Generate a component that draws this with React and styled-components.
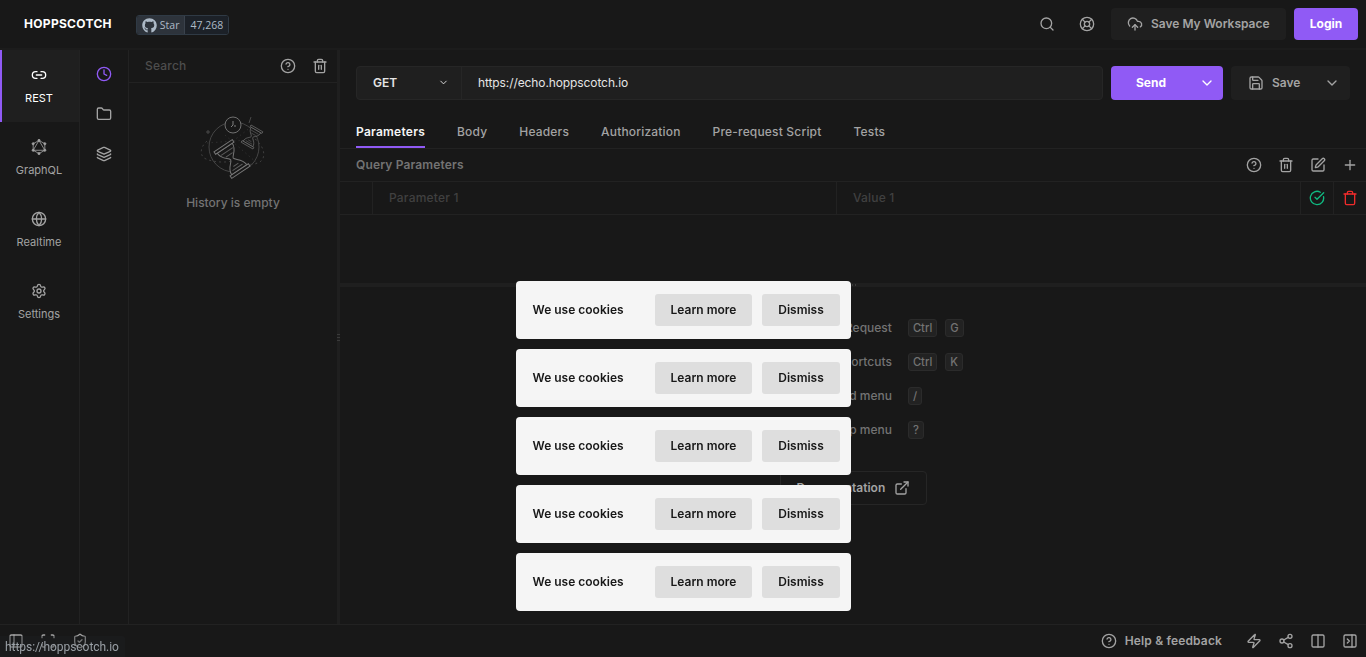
import React from "react";
import styled, { createGlobalStyle } from "styled-components";
import {
  ChevronDown,
  CircleCheckBig,
  CircleHelp,
  Clock,
  CloudUpload,
  Columns2,
  ExternalLink,
  Folder,
  Globe,
  Layers,
  LifeBuoy,
  Link2,
  PanelLeft,
  PanelRightClose,
  Plus,
  Save,
  Scan,
  Search,
  Settings,
  Share2,
  ShieldCheck,
  SquarePen,
  Trash,
  Trash2,
  Zap
} from "lucide-react";
import { FaGithub } from "react-icons/fa";

const accent = "#905af5";
const border = "#222222";

const GlobalStyle = createGlobalStyle`
  html, body {
    margin: 0;
    height: 100%;
    overflow: hidden;
    background: #181818;
    color: #a3a3a3;
    font-family: Inter, "Noto Sans", sans-serif;
    font-size: 12px;
  }
  * {
    box-sizing: border-box;
  }
  svg {
    flex-shrink: 0;
  }
`;

const GraphqlIcon = ({ size = 16 }) => (
  <svg width={size} height={size} viewBox="1 1 22 22" fill="none" stroke="currentColor" strokeWidth="1.1">
    <path d="M12 3 20 7.5V16.5L12 21 4 16.5V7.5Z" />
    <path d="M12 3 20 16.5H4Z" />
    <circle cx="12" cy="3" r="1.5" fill="currentColor" />
    <circle cx="20" cy="7.5" r="1.5" fill="currentColor" />
    <circle cx="20" cy="16.5" r="1.5" fill="currentColor" />
    <circle cx="12" cy="21" r="1.5" fill="currentColor" />
    <circle cx="4" cy="16.5" r="1.5" fill="currentColor" />
    <circle cx="4" cy="7.5" r="1.5" fill="currentColor" />
  </svg>
);

const Hourglass = ({ transform }) => (
  <g transform={transform} stroke="#777" fill="#181818">
    <path d="M-9 -13C-9 -5 -2 -3 -1.5 0-2 3-9 5-9 13H9C9 5 2 3 1.5 0 2-3 9-5 9-13Z" />
    <path d="M-7 -9H7M-4 -5H4M-3 7H3M-6 10H6" stroke="#5c5c5c" />
    <rect x="-11" y="-16" width="22" height="3" />
    <rect x="-11" y="13" width="22" height="3" />
  </g>
);

const HistoryArt = () => (
  <svg width="68" height="68" viewBox="0 0 68 68" fill="none" strokeWidth="1">
    <circle cx="35" cy="32" r="25" stroke="#454545" />
    <path d="M8 26C1 32 0 41 7 44c7 3 18 4 26 2M56 24c8 6 11 16 7 21-3 4-10 5-17 4" stroke="#3f3f3f" strokeDasharray="2 3" />
    <path d="M8 28 62 24M16 40 52 12M26 20 58 48" stroke="#2e2e2e" strokeDasharray="1.5 3" />
    <circle cx="34" cy="10" r="8" fill="#181818" stroke="#707070" />
    <path d="M34 6v4l-2 2M35 11h2" stroke="#808080" />
    <path d="M52 2 50 8M7 17h4M9 15v4" stroke="#484848" />
    <Hourglass transform="translate(33 44) rotate(-33.7)" />
    <Hourglass transform="translate(53 22) rotate(30) scale(0.62)" />
  </svg>
);

const Page = styled.div`
  height: 100vh;
  display: flex;
  flex-direction: column;
`;

const Header = styled.header`
  flex: 0 0 50px;
  display: flex;
  align-items: center;
  justify-content: space-between;
  padding: 0 8px 0 24px;
  border-bottom: 2px solid #1c1c1c;
`;

const Brand = styled.div`
  display: flex;
  align-items: center;
  gap: 24px;
`;

const Logo = styled.span`
  padding-bottom: 1px;
  color: #fff;
  font-weight: 700;
  font-size: 12px;
  letter-spacing: 0.3px;
`;

const StarBadge = styled.div`
  display: flex;
  height: 20px;
  margin-top: 2px;
  border: 1px solid #2f3a45;
  border-radius: 3px;
  font: 500 10.5px "Open Sans", sans-serif;
  color: #adbac7;
  overflow: hidden;
`;

const StarPart = styled.span`
  display: flex;
  align-items: center;
  gap: 3px;
  padding: 0 5px;
  background: ${(p) => (p.$count ? "#1c2128" : "#2d333b")};
  border-left: ${(p) => (p.$count ? "1px solid #3a424c" : "none")};
`;

const HeaderActions = styled.div`
  display: flex;
  align-items: center;
`;

const HeaderIcon = styled.button`
  width: 40px;
  height: 32px;
  display: flex;
  align-items: center;
  justify-content: center;
  background: none;
  border: 0;
  padding: 0;
  color: #a3a3a3;
`;

const WorkspaceButton = styled.button`
  height: 32px;
  width: 175px;
  display: flex;
  align-items: center;
  gap: 8px;
  margin: 0 8px 0 4px;
  padding: 0 16px 1px;
  background: #1f1f1f;
  border: 0;
  border-radius: 4px;
  color: #a3a3a3;
  font: 600 12px Inter, sans-serif;
  white-space: nowrap;
`;

const LoginButton = styled.button`
  height: 32px;
  width: 64px;
  padding: 0 0 2px;
  background: ${accent};
  border: 0;
  border-radius: 4px;
  color: #fff;
  font: 700 12px Inter, sans-serif;
`;

const Body = styled.div`
  flex: 1;
  min-height: 0;
  display: flex;
`;

const Nav = styled.nav`
  flex: 0 0 80px;
  border-right: 1px solid ${border};
`;

const NavItem = styled.div`
  height: 72px;
  display: flex;
  flex-direction: column;
  align-items: center;
  justify-content: center;
  gap: 8px;
  font-size: 11px;
  color: ${(p) => (p.$active ? "#fff" : "#a3a3a3")};
  background: ${(p) => (p.$active ? "#1f1f1f" : "transparent")};
  border-left: 2px solid ${(p) => (p.$active ? accent : "transparent")};
  padding-right: 3px;
`;

const SubNav = styled.div`
  flex: 0 0 49px;
  padding-top: 4px;
  border-right: 1px solid ${border};
`;

const SubNavItem = styled.div`
  height: 40px;
  display: flex;
  align-items: center;
  justify-content: center;
  color: ${(p) => (p.$active ? accent : "#a3a3a3")};
`;

const HistoryPanel = styled.aside`
  flex: 0 0 208px;
  display: flex;
  flex-direction: column;
`;

const SearchRow = styled.div`
  height: 33px;
  display: flex;
  align-items: center;
  padding: 0 1px 0 16px;
  border-bottom: 1px solid ${border};
  font-weight: 500;
  letter-spacing: 0.2px;
  color: #4d4d4d;
`;

const SearchText = styled.span`
  flex: 1;
  padding-bottom: 2px;
`;

const SquareIcon = styled.span`
  width: 32px;
  height: 32px;
  display: flex;
  align-items: center;
  justify-content: center;
  color: ${(p) => p.$color || "#a3a3a3"};
`;

const EmptyState = styled.div`
  display: flex;
  flex-direction: column;
  align-items: center;
  gap: 12px;
  padding-top: 32px;
  font-weight: 500;
  color: #737373;
`;

const VerticalSplit = styled.div`
  flex: 0 0 3px;
  display: flex;
  align-items: center;
  background: #1f1f1f;
`;

const VerticalGrip = styled.span`
  width: 3px;
  height: 7px;
  background: repeating-linear-gradient(#3a3a3a 0 1px, transparent 1px 3px);
`;

const Main = styled.main`
  flex: 1;
  min-width: 0;
  display: flex;
  flex-direction: column;
`;

const UrlBar = styled.div`
  display: flex;
  padding: 16px 16px 0;
  gap: 8px;
`;

const UrlGroup = styled.div`
  flex: 1;
  display: flex;
  height: 34px;
  background: #1f1f1f;
  border: 1px solid #262626;
  border-radius: 4px;
`;

const Method = styled.div`
  width: 105px;
  display: flex;
  align-items: center;
  justify-content: space-between;
  padding: 0 12px 1px 16px;
  border-right: 1px solid #262626;
  color: #e5e5e5;
  font-weight: 600;
`;

const UrlText = styled.div`
  flex: 1;
  display: flex;
  align-items: center;
  padding: 0 0 1px 16px;
  letter-spacing: -0.1px;
  color: #e5e5e5;
`;

const SendButton = styled.button`
  width: 112px;
  height: 34px;
  display: flex;
  align-items: center;
  padding: 0 0 1px;
  background: ${accent};
  border: 0;
  border-radius: 4px;
  color: #fff;
  font: 700 12px Inter, sans-serif;
`;

const SendLabel = styled.span`
  flex: 1;
  text-align: center;
`;

const SendCaret = styled.span`
  width: 32px;
  display: flex;
  justify-content: center;
`;

const SaveButton = styled.button`
  width: 119px;
  height: 34px;
  display: flex;
  align-items: center;
  padding: 0 10px 1px 17px;
  background: #1f1f1f;
  border: 0;
  border-radius: 4px;
  color: #a3a3a3;
  font: 600 12px Inter, sans-serif;
`;

const SaveLabel = styled.span`
  flex: 1;
  text-align: left;
  padding-left: 8px;
`;

const Tabs = styled.div`
  display: flex;
  gap: 32px;
  height: 34px;
  margin-top: 15px;
  padding: 0 16px;
  border-bottom: 1px solid ${border};
`;

const Tab = styled.div`
  display: flex;
  align-items: center;
  height: 33px;
  padding-top: 1px;
  font-weight: ${(p) => (p.$active ? 600 : 500)};
  letter-spacing: ${(p) => (p.$active ? "0.25px" : "0.18px")};
  color: ${(p) => (p.$active ? "#f5f5f5" : "#a3a3a3")};
  border-bottom: 2px solid ${(p) => (p.$active ? accent : "transparent")};
`;

const QueryHeader = styled.div`
  height: 33px;
  display: flex;
  align-items: center;
  padding-left: 16px;
  border-bottom: 1px solid ${border};
  font-weight: 600;
  letter-spacing: 0.15px;
  color: #737373;
`;

const QueryTitle = styled.span`
  flex: 1;
  padding-bottom: 2px;
`;

const ParamRow = styled.div`
  height: 33px;
  display: grid;
  grid-template-columns: 33px 1fr 1fr 33px 32px;
  border-bottom: 1px solid ${border};
  color: #404040;
  font-weight: 500;
  letter-spacing: 0.2px;
`;

const ParamCell = styled.div`
  display: flex;
  align-items: center;
  justify-content: ${(p) => (p.$icon ? "center" : "flex-start")};
  padding: 0 0 ${(p) => (p.$icon ? 0 : "1px")} ${(p) => (p.$icon ? 0 : "16px")};
  border-right: ${(p) => (p.$last ? "none" : `1px solid ${border}`)};
  color: ${(p) => p.$color || "inherit"};
`;

const RequestArea = styled.div`
  flex: 0 0 68px;
`;

const HorizontalSplit = styled.div`
  flex: 0 0 4px;
  display: flex;
  justify-content: center;
  align-items: center;
  background: #1f1f1f;
`;

const HorizontalGrip = styled.span`
  width: 9px;
  height: 2px;
  background: repeating-linear-gradient(90deg, #3a3a3a 0 1px, transparent 1px 3px);
`;

const ResponseArea = styled.div`
  flex: 1;
  display: flex;
  flex-direction: column;
  align-items: center;
  padding-top: 28px;
  font-weight: 500;
  color: #737373;
`;

const Shortcuts = styled.div`
  display: grid;
  grid-template-columns: auto 53px;
  column-gap: 16px;
  row-gap: 8px;
  align-items: center;
`;

const ShortcutLabel = styled.span`
  height: 26px;
  line-height: 26px;
  text-align: right;
`;

const Keys = styled.span`
  display: flex;
  gap: 8px;
`;

const Kbd = styled.kbd`
  display: inline-block;
  padding: 0 4px;
  height: 18px;
  background: #222;
  border: 1px solid #2b2b2b;
  border-radius: 3px;
  color: #737373;
  font: 500 11.2px/16px Inter, sans-serif;
`;

const DocsButton = styled.div`
  width: 147px;
  height: 34px;
  display: flex;
  align-items: center;
  gap: 9px;
  margin-top: 28px;
  padding: 0 16px 1px;
  border: 1px solid #262626;
  border-radius: 4px;
  color: #a3a3a3;
  font-weight: 600;
  white-space: nowrap;
`;

const Footer = styled.footer`
  flex: 0 0 33px;
  display: flex;
  align-items: center;
  justify-content: space-between;
  border-top: 1px solid ${border};
`;

const FooterGroup = styled.div`
  display: flex;
  align-items: center;
`;

const HelpButton = styled.div`
  display: flex;
  align-items: center;
  gap: 8px;
  padding: 0 16px 1px;
  font-weight: 600;
  letter-spacing: 0.15px;
  color: #a3a3a3;
`;

const StatusBubble = styled.div`
  position: fixed;
  left: 0;
  bottom: 0;
  height: 21px;
  padding: 0 6px 0 5px;
  display: flex;
  align-items: center;
  background: rgba(32, 33, 36, 0.35);
  border-top-right-radius: 3px;
  letter-spacing: -0.05px;
  color: #9aa0a6;
  font: 12px Roboto, sans-serif;
`;

const Toasts = styled.div`
  position: fixed;
  left: calc(50% - 167.5px);
  bottom: 46px;
  width: 335px;
  display: flex;
  flex-direction: column;
  gap: 10px;
`;

const Toast = styled.div`
  height: 58px;
  display: flex;
  align-items: center;
  padding: 0 11px 0 17px;
  background: #f5f5f5;
  border-radius: 4px;
  color: #181818;
  font-weight: 600;
`;

const ToastText = styled.span`
  flex: 1;
  padding-bottom: 1px;
`;

const ToastButton = styled.span`
  height: 32px;
  width: ${(p) => p.$width}px;
  margin-left: ${(p) => p.$gap || 0}px;
  padding: 0 0 1px 1px;
  display: flex;
  align-items: center;
  justify-content: center;
  background: #dedede;
  border-radius: 3px;
`;

const navItems = [
  { label: "REST", icon: <Link2 size={16} />, active: true },
  { label: "GraphQL", icon: <GraphqlIcon /> },
  { label: "Realtime", icon: <Globe size={16} /> },
  { label: "Settings", icon: <Settings size={16} /> }
];

const tabs = ["Parameters", "Body", "Headers", "Authorization", "Pre-request Script", "Tests"];

const shortcuts = [
  ["Send Request", ["Ctrl", "G"]],
  ["Keyboard shortcuts", ["Ctrl", "K"]],
  ["Search & command menu", ["/"]],
  ["Help menu", ["?"]]
];

const App = () => (
  <Page>
    <GlobalStyle />
    <Header>
      <Brand>
        <Logo>HOPPSCOTCH</Logo>
        <StarBadge>
          <StarPart>
            <FaGithub size={15} />
            Star
          </StarPart>
          <StarPart $count>47,268</StarPart>
        </StarBadge>
      </Brand>
      <HeaderActions>
        <HeaderIcon>
          <Search size={16} />
        </HeaderIcon>
        <HeaderIcon>
          <LifeBuoy size={16} />
        </HeaderIcon>
        <WorkspaceButton>
          <CloudUpload size={16} />
          Save My Workspace
        </WorkspaceButton>
        <LoginButton>Login</LoginButton>
      </HeaderActions>
    </Header>
    <Body>
      <Nav>
        {navItems.map((item) => (
          <NavItem key={item.label} $active={item.active}>
            {item.icon}
            {item.label}
          </NavItem>
        ))}
      </Nav>
      <SubNav>
        <SubNavItem $active>
          <Clock size={16} />
        </SubNavItem>
        <SubNavItem>
          <Folder size={16} />
        </SubNavItem>
        <SubNavItem>
          <Layers size={16} />
        </SubNavItem>
      </SubNav>
      <HistoryPanel>
        <SearchRow>
          <SearchText>Search</SearchText>
          <SquareIcon>
            <CircleHelp size={16} />
          </SquareIcon>
          <SquareIcon>
            <Trash2 size={16} />
          </SquareIcon>
        </SearchRow>
        <EmptyState>
          <HistoryArt />
          History is empty
        </EmptyState>
      </HistoryPanel>
      <VerticalSplit>
        <VerticalGrip />
      </VerticalSplit>
      <Main>
        <UrlBar>
          <UrlGroup>
            <Method>
              GET
              <ChevronDown size={11} />
            </Method>
            <UrlText>https://echo.hoppscotch.io</UrlText>
          </UrlGroup>
          <SendButton>
            <SendLabel>Send</SendLabel>
            <SendCaret>
              <ChevronDown size={16} />
            </SendCaret>
          </SendButton>
          <SaveButton>
            <Save size={16} />
            <SaveLabel>Save</SaveLabel>
            <ChevronDown size={16} />
          </SaveButton>
        </UrlBar>
        <Tabs>
          {tabs.map((tab, i) => (
            <Tab key={tab} $active={i === 0}>
              {tab}
            </Tab>
          ))}
        </Tabs>
        <QueryHeader>
          <QueryTitle>Query Parameters</QueryTitle>
          <SquareIcon>
            <CircleHelp size={16} />
          </SquareIcon>
          <SquareIcon>
            <Trash2 size={16} />
          </SquareIcon>
          <SquareIcon>
            <SquarePen size={16} />
          </SquareIcon>
          <SquareIcon>
            <Plus size={16} />
          </SquareIcon>
        </QueryHeader>
        <ParamRow>
          <ParamCell />
          <ParamCell>Parameter 1</ParamCell>
          <ParamCell>Value 1</ParamCell>
          <ParamCell $icon $color="#10b981">
            <CircleCheckBig size={16} />
          </ParamCell>
          <ParamCell $icon $last $color="#ef2b2b">
            <Trash size={16} />
          </ParamCell>
        </ParamRow>
        <RequestArea />
        <HorizontalSplit>
          <HorizontalGrip />
        </HorizontalSplit>
        <ResponseArea>
          <Shortcuts>
            {shortcuts.map(([label, keys]) => (
              <React.Fragment key={label}>
                <ShortcutLabel>{label}</ShortcutLabel>
                <Keys>
                  {keys.map((key) => (
                    <Kbd key={key}>{key}</Kbd>
                  ))}
                </Keys>
              </React.Fragment>
            ))}
          </Shortcuts>
          <DocsButton>
            Documentation
            <ExternalLink size={16} />
          </DocsButton>
        </ResponseArea>
      </Main>
    </Body>
    <Footer>
      <FooterGroup>
        <SquareIcon>
          <PanelLeft size={16} />
        </SquareIcon>
        <SquareIcon>
          <Scan size={16} />
        </SquareIcon>
        <SquareIcon>
          <ShieldCheck size={16} />
        </SquareIcon>
      </FooterGroup>
      <FooterGroup>
        <HelpButton>
          <CircleHelp size={16} />
          Help &amp; feedback
        </HelpButton>
        <SquareIcon>
          <Zap size={16} />
        </SquareIcon>
        <SquareIcon>
          <Share2 size={16} />
        </SquareIcon>
        <SquareIcon>
          <Columns2 size={16} />
        </SquareIcon>
        <SquareIcon>
          <PanelRightClose size={16} />
        </SquareIcon>
      </FooterGroup>
    </Footer>
    <StatusBubble>https://hoppscotch.io</StatusBubble>
    <Toasts>
      {[0, 1, 2, 3, 4].map((n) => (
        <Toast key={n}>
          <ToastText>We use cookies</ToastText>
          <ToastButton $width={97}>Learn more</ToastButton>
          <ToastButton $width={78} $gap={10}>
            Dismiss
          </ToastButton>
        </Toast>
      ))}
    </Toasts>
  </Page>
);

export default App;
